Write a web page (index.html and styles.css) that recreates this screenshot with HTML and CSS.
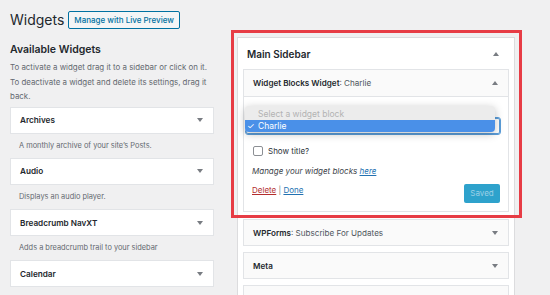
FILE: index.html
```html
<!DOCTYPE html>
<html>
<head>
<meta charset="utf-8">
<link rel="stylesheet" href="styles.css">
</head>
<body>
<div class="page">
  <div class="left">
    <div class="titlebar">
      <h1 class="title">Widgets</h1>
      <a class="btn-outline">Manage with Live Preview</a>
    </div>
    <h2 class="avail">Available Widgets</h2>
    <p class="desc">To activate a widget drag it to a sidebar or click on it. To deactivate a widget and delete its settings, drag it back.</p>
    <div class="wlist">
      <div class="wbox"><span class="wname">Archives</span><span class="arrow down"></span></div>
      <div class="wdesc">A monthly archive of your site’s Posts.</div>
      <div class="wbox"><span class="wname">Audio</span><span class="arrow down"></span></div>
      <div class="wdesc">Displays an audio player.</div>
      <div class="wbox"><span class="wname">Breadcrumb NavXT</span><span class="arrow down"></span></div>
      <div class="wdesc">Adds a breadcrumb trail to your sidebar</div>
      <div class="wbox"><span class="wname">Calendar</span><span class="arrow down"></span></div>
    </div>
  </div>
  <div class="right">
    <div class="sidebar">
      <div class="sb-head"><span class="sb-title">Main Sidebar</span><span class="arrow up"></span></div>
      <div class="widget open">
        <div class="w-head"><span><b>Widget Blocks Widget</b>: Charlie</span><span class="arrow up"></span></div>
        <div class="w-body">
          <div class="select"></div>
          <div class="dropdown">
            <div class="dd-item dd-placeholder">Select a widget block</div>
            <div class="dd-item dd-selected"><span class="check">✓</span>Charlie</div>
          </div>
          <label class="chk"><span class="box"></span>Show title?</label>
          <p class="manage">Manage your widget blocks <a class="link">here</a></p>
          <div class="actions">
            <div class="links"><a class="del">Delete</a> <span class="sep">|</span> <a class="link">Done</a></div>
            <span class="saved">Saved</span>
          </div>
        </div>
      </div>
      <div class="widget"><div class="w-head"><span><b>WPForms</b>: Subscribe For Updates</span><span class="arrow down"></span></div></div>
      <div class="widget"><div class="w-head"><span><b>Meta</b></span><span class="arrow down"></span></div></div>
      <div class="widget"><div class="w-head"><span></span></div></div>
    </div>
    <div class="highlight"></div>
  </div>
</div>
</body>
</html>
```
FILE: styles.css
```css
html, body { margin: 0; padding: 0; }
body {
  width: 550px; height: 295px; overflow: hidden;
  background: #f0f0f1;
  font-family: Inter, "Liberation Sans", sans-serif;
  color: #2c3338;
}
.page { display: flex; gap: 23px; padding: 0 0 0 10px; }
.left { width: 204px; flex: none; }
.titlebar { display: flex; align-items: center; gap: 4px; padding-top: 11px; height: 18px; }
.title { margin: 0; font-size: 14px; font-weight: 400; color: #23282d; line-height: 18px; }
.btn-outline {
  font-size: 8px; font-weight: 500; color: #0071a1; border: 1px solid #0071a1; border-radius: 2px;
  background: #f3f5f6; padding: 0 5px; height: 16px; line-height: 16px;
}
.avail { margin: 14px 0 0; font-size: 10.5px; font-weight: 600; color: #23282d; line-height: 14px; }
.desc { margin: 3px 0 0; font-size: 7.9px; line-height: 14.5px; color: #646970; }
.wlist { margin-top: 3px; }
.wbox {
  background: #fff; border: 1px solid #e2e4e7; height: 25px;
  display: flex; align-items: center; justify-content: space-between; padding: 0 10px 0 9px;
  font-size: 8.2px; font-weight: 600; color: #23282d;
}
.wdesc { font-size: 7.4px; color: #646970; padding: 7px 0 0 9px; height: 17.3px; line-height: 10px; }
.arrow { width: 0; height: 0; border-left: 3px solid transparent; border-right: 3px solid transparent; }
.arrow.down { border-top: 4px solid #787c82; }
.arrow.up { border-bottom: 4px solid #787c82; }
.right { width: 278px; position: relative; padding-top: 37px; flex: none; }
.sidebar { background: #fff; border: 1px solid #dcdcde; border-bottom: none; height: 258px; padding: 0 5px; box-sizing: border-box; }
.sb-head { height: 31px; display: flex; align-items: center; justify-content: space-between; padding: 0 10px 0 4px; }
.sb-title { font-size: 10px; font-weight: 600; color: #23282d; }
.widget { border: 1px solid #e2e4e7; margin-bottom: 6px; background: #fff; }
.widget.open { margin-bottom: 7px; }
.w-head {
  height: 25px; display: flex; align-items: center; justify-content: space-between;
  padding: 0 10px 0 9px; font-size: 8.1px; color: #50575e; background: #fafafa;
}
.w-head b { font-weight: 600; color: #23282d; }
.widget.open .w-head { border-bottom: 1px solid #e2e4e7; height: 26px; }
.w-body { position: relative; padding: 20px 8px 8px 1px; }
.select { height: 16px; border: 1px solid #5b9dd9; border-radius: 3px; box-shadow: 0 0 0 1px #5b9dd9 inset; width: 254px; }
.dropdown {
  position: absolute; left: 1px; top: 9px; width: 250px;
  background: #ececec; border-radius: 4px; box-shadow: 0 2px 8px rgba(0,0,0,0.25);
  font-size: 8.5px; padding-top: 2px; overflow: hidden;
}
.dd-item { height: 12px; line-height: 12px; }
.dd-placeholder { color: #b3b3b3; padding-left: 13px; }
.dd-selected { background: #4a90e8; color: #fff; padding-left: 2px; }
.check { display: inline-block; width: 11px; }
.chk { display: flex; align-items: center; gap: 5px; margin-top: 10px; padding-left: 8px; font-size: 8px; color: #2c3338; height: 12px; }
.box { width: 8px; height: 8px; border: 1px solid #8c8f94; border-radius: 2px; background: #fff; }
.manage { margin: 8px 0 0 7px; font-size: 8px; font-style: italic; color: #3c434a; line-height: 12px; }
.link { color: #2271b1; text-decoration: underline; }
.actions { display: flex; justify-content: space-between; align-items: flex-start; padding-left: 7px; margin-top: 7px; font-size: 8px; }
.links { margin-top: 1px; }
.del { color: #b32d2e; text-decoration: underline; }
.sep { color: #787c82; }
.saved { width: 36px; height: 19px; line-height: 19px; text-align: center; background: #2ea2cc; color: #9cd0e6; border-radius: 2px; font-size: 8px; }
.highlight { position: absolute; left: -6px; top: 30px; width: 285px; height: 182px; border: 3px solid #e73c45; pointer-events: none; }
```
